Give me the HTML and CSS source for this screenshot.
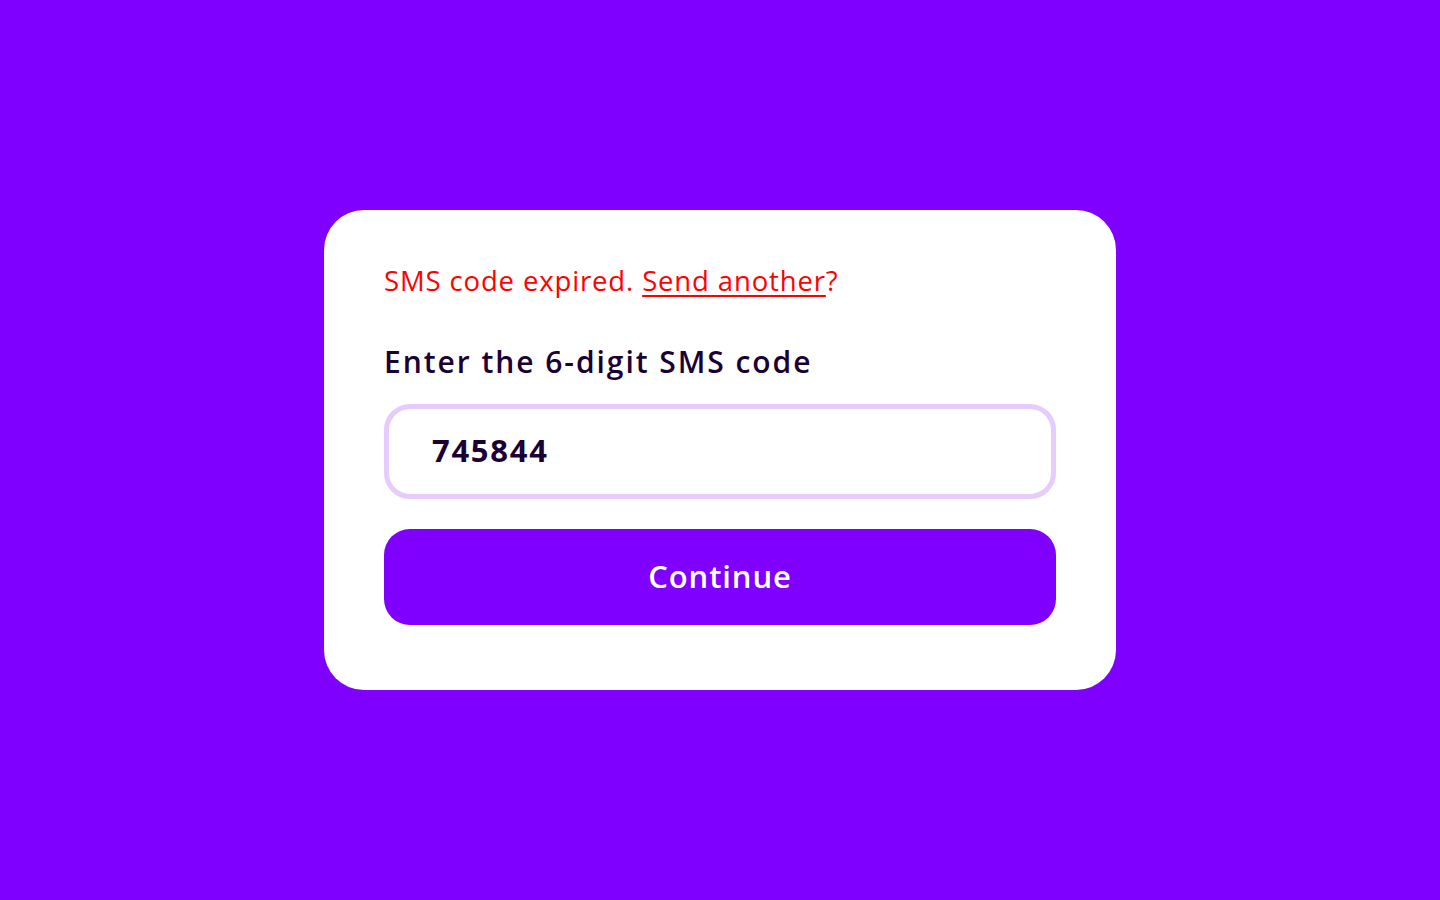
FILE: index.html
```html
<!DOCTYPE html>
<html lang="en">
<head>
<meta charset="utf-8">
<title>SMS code</title>
<link rel="stylesheet" href="styles.css">
</head>
<body>
<main class="page">
  <form class="card">
    <p class="error">SMS code expired. <a class="error-link" href="#">Send another</a>?</p>
    <label class="label" for="code">Enter the 6-digit SMS code</label>
    <input class="code-input" id="code" type="text" value="745844">
    <button class="btn" type="button">Continue</button>
  </form>
</main>
</body>
</html>
```

FILE: styles.css
```css
* { box-sizing: border-box; }
html, body { margin: 0; padding: 0; height: 100%; }
body {
  background: #8000ff;
  font-family: "Open Sans", "Noto Sans", sans-serif;
}
.page {
  min-height: 100vh;
  display: flex;
  align-items: center;
  justify-content: center;
}
.card {
  width: 792px;
  background: #ffffff;
  border-radius: 40px;
  padding: 53px 60px 65px;
  display: flex;
  flex-direction: column;
}
.error {
  margin: 0;
  color: #ff0000;
  font-size: 27.5px;
  line-height: 36px;
  letter-spacing: 0.86px;
}
.error-link {
  color: #ff0000;
  text-decoration: underline;
  text-decoration-thickness: 1.5px;
  text-underline-offset: 4px;
}
.label {
  margin-top: 43px;
  color: #1b0033;
  font-size: 30px;
  line-height: 40px;
  font-weight: 600;
  letter-spacing: 1.95px;
}
.code-input {
  margin-top: 22px;
  height: 95px;
  border: 5px solid #e6ccfc;
  border-radius: 26px;
  padding: 0 0 4px 43px;
  font-family: inherit;
  font-size: 31px;
  font-weight: 700;
  color: #1b0033;
  letter-spacing: 1.7px;
  outline: none;
  background: #ffffff;
}
.btn {
  margin-top: 30px;
  height: 96px;
  border: 0;
  border-radius: 26px;
  background: #8000ff;
  color: #ffffff;
  font-family: inherit;
  font-size: 31px;
  font-weight: 600;
  letter-spacing: 0.9px;
  padding: 0 0 2px;
  cursor: pointer;
}
```
